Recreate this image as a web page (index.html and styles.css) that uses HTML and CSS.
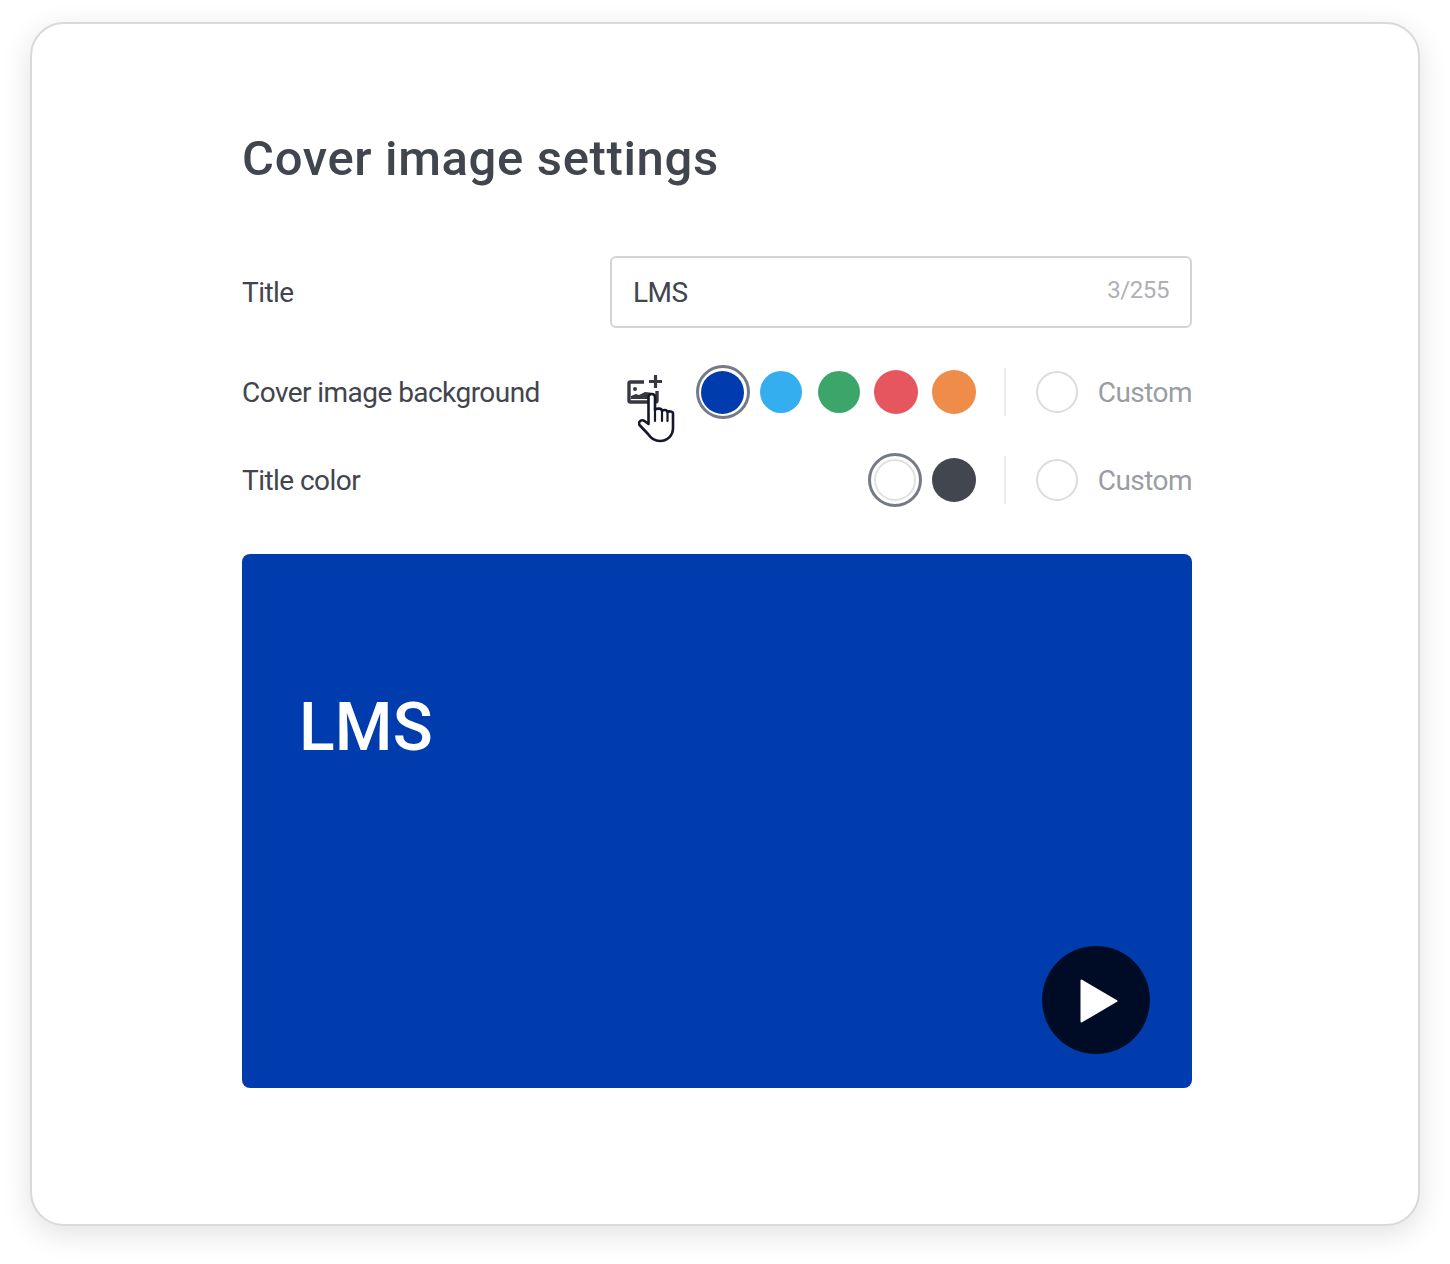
FILE: index.html
```html
<!DOCTYPE html>
<html lang="en">
<head>
<meta charset="utf-8">
<title>Cover image settings</title>
<link rel="stylesheet" href="styles.css">
</head>
<body>
<main class="card">
  <h1 class="heading">Cover image settings</h1>
  <div class="row row-title">
    <span class="label">Title</span>
    <div class="input">
      <span class="input-value">LMS</span>
      <span class="counter">3/255</span>
    </div>
  </div>
  <div class="row row-bg">
    <span class="label">Cover image background</span>
    <div class="controls">
      <div class="upload">
        <svg class="upload-icon" viewBox="0 0 36 34" width="36" height="34" fill="none" stroke="#36393f">
          <path d="M17 7H3.500a1.500 1.500 0 0 0-1.500 1.500v17a1.500 1.500 0 0 0 1.500 1.500h25a1.500 1.500 0 0 0 1.500-1.500V16" stroke-width="3.400"/>
          <path d="M28.500 0v13M22 6.500h13" stroke-width="3.200"/>
          <circle cx="8" cy="14" r="2" fill="#36393f" stroke="none"/>
          <path d="M4 24v-3l5-2 3 1 6-3 9 1v6z" fill="#36393f" stroke="none"/>
        </svg>
        <svg class="cursor" viewBox="0 0 38 50" width="38" height="50" fill="#fff" stroke="#14182a" stroke-width="2.600" stroke-linejoin="round" stroke-linecap="round">
          <path d="M10.500 31V4c0-4 6.500-4 6.500 0v13c1-2 7-2 7 1 1-1.500 5-1.500 5.500 1 1-1 5.500-1 5.500 1.500V35c0 7-5 13-13 13-6 0-9-2.500-12-7L1.500 32c-1.500-3 1.500-6 5-4z"/>
          <path d="M17 16v12M24 18v10M29.500 20v8" fill="none" stroke-width="2.200"/>
        </svg>
      </div>
      <span class="swatch swatch-ring"><span class="dot dot-blue"></span></span>
      <span class="dot dot-sky"></span>
      <span class="dot dot-green"></span>
      <span class="dot dot-red"></span>
      <span class="dot dot-orange"></span>
      <span class="divider"></span>
      <span class="dot dot-custom"></span>
      <span class="custom">Custom</span>
    </div>
  </div>
  <div class="row row-color">
    <span class="label">Title color</span>
    <div class="controls">
      <span class="swatch swatch-ring"><span class="dot dot-white"></span></span>
      <span class="dot dot-dark"></span>
      <span class="divider"></span>
      <span class="dot dot-custom"></span>
      <span class="custom">Custom</span>
    </div>
  </div>
  <section class="preview">
    <div class="preview-title">LMS</div>
    <div class="play">
      <svg viewBox="0 0 38 44" width="38" height="44"><path d="M1.500 1.500v41L36.500 22z" fill="#fff" stroke="#fff" stroke-width="2" stroke-linejoin="round"/></svg>
    </div>
  </section>
</main>
</body>
</html>
```
FILE: styles.css
```css
* { box-sizing: border-box; }
html, body { margin: 0; background: #fff; }
body {
  width: 1450px;
  height: 1264px;
  padding: 22px 30px 0;
  overflow: hidden;
  font-family: Roboto, "Liberation Sans", sans-serif;
  color: #41454d;
}
.card {
  width: 1390px;
  height: 1204px;
  padding: 107px 226px 0 210px;
  background: #fff;
  border: 2px solid #d9d9d9;
  border-radius: 34px;
  box-shadow: 0 8px 30px rgba(0, 0, 0, 0.12);
}
.heading {
  margin: 0 0 69px;
  font-size: 49px;
  line-height: 56px;
  font-weight: 500;
  letter-spacing: 0.65px;
  color: #41454d;
}
.row { display: flex; align-items: center; justify-content: space-between; }
.label { font-size: 28px; line-height: 40px; letter-spacing: -0.55px; padding-top: 2px; }
.row-title { height: 72px; }
.row-bg { height: 44px; margin-top: 42px; }
.row-color { height: 44px; margin-top: 44px; margin-bottom: 52px; }
.input {
  width: 582px;
  height: 72px;
  padding: 0 21px;
  display: flex;
  align-items: center;
  justify-content: space-between;
  border: 2px solid #d4d4d4;
  border-radius: 6px;
}
.input-value { font-size: 28px; line-height: 40px; letter-spacing: -0.55px; padding-top: 2px; }
.counter { font-size: 24px; line-height: 32px; color: #aeb0b4; margin-top: -5px; letter-spacing: -0.4px; }
.controls { display: flex; align-items: center; height: 44px; width: 582px; justify-content: flex-end; }
.upload { position: relative; width: 36px; height: 34px; margin-right: 33px; }
.upload-icon { display: block; }
.cursor { position: absolute; left: 11px; top: 18px; }
.dot { display: block; width: 44px; height: 44px; border-radius: 50%; flex: none; margin-left: 14px; }
.swatch { display: flex; align-items: center; justify-content: center; flex: none; width: 54px; height: 54px; border: 3px solid #757a85; border-radius: 50%; margin: 0 -5px 0 0; background: #fff; }
.swatch .dot { margin: 0; }
.dot-blue { background: #003cae; width: 43px; height: 43px; }
.dot-sky { background: #34aeef; width: 42px; height: 42px; margin-left: 15px; }
.dot-green { background: #3ca66a; width: 42px; height: 42px; margin-left: 16px; }
.dot-red { background: #e5565e; }
.dot-orange { background: #f08c4a; }
.dot-white { background: #fff; border: 2px solid #e1e1e1; width: 42px; height: 42px; }
.dot-dark { background: #42464e; margin-left: 15px; }
.dot-custom { background: #fff; border: 2px solid #dcdcdc; width: 42px; height: 42px; margin-left: 0; }
.divider { width: 2px; height: 48px; background: #ececec; margin: 0 30px 0 28px; flex: none; }
.custom { font-size: 28px; line-height: 40px; color: #9a9da2; margin-left: 20px; letter-spacing: -0.55px; padding-top: 2px; }
.preview {
  position: relative;
  width: 950px;
  height: 534px;
  padding: 136px 57px 0;
  background: #003cae;
  border-radius: 8px;
}
.preview-title { font-size: 66px; line-height: 76px; font-weight: 500; letter-spacing: 0.2px; color: #fff; }
.play {
  position: absolute;
  right: 42px;
  bottom: 34px;
  width: 108px;
  height: 108px;
  padding: 2px 0 0 5px;
  display: flex;
  align-items: center;
  justify-content: center;
  background: #000c26;
  border-radius: 50%;
}
```
